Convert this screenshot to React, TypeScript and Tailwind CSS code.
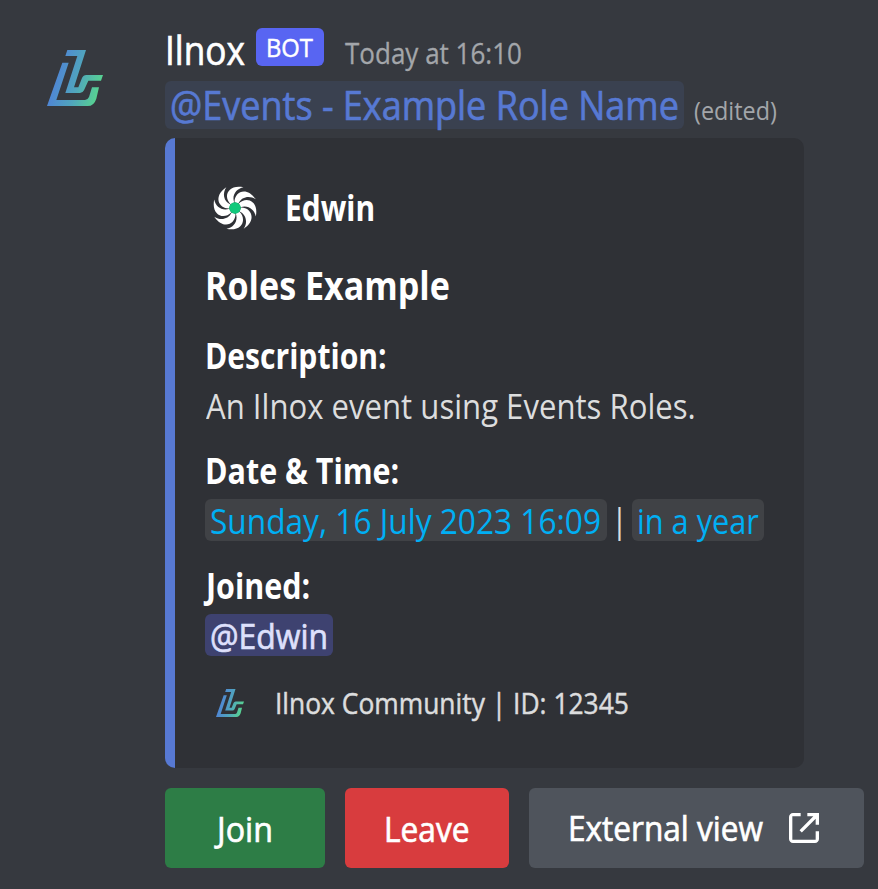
import type { ReactNode } from 'react';
import clsx from 'clsx';

const MEDIUM = '[-webkit-text-stroke:0.7px_currentColor]';

function Label({ className, children }: { className?: string; children: ReactNode }) {
  return (
    <span className={clsx('block w-max shrink-0 origin-left whitespace-nowrap', className)}>
      {children}
    </span>
  );
}

function Logo({ id, className }: { id: string; className?: string }) {
  return (
    <svg viewBox="0 0 168 168" className={className} fill={`url(#${id})`}>
      <defs>
        <linearGradient id={id} gradientUnits="userSpaceOnUse" x1="15" y1="90" x2="160" y2="130">
          <stop offset="0" stopColor="#4f83d6" />
          <stop offset="0.5" stopColor="#50a5bd" />
          <stop offset="1" stopColor="#58d68d" />
        </linearGradient>
      </defs>
      <path d="M61 0H117L81 112H94L105 84Q109 75 118 75H168L162 92H124L111 121Q107 129 99 129H55L91 18H55Z" />
      <path d="M46 38H65L28 150H114Q122 150 126 141L135 112H156L148 146Q141 168 122 168H0Z" />
    </svg>
  );
}

function Swirl() {
  return (
    <svg viewBox="-23 -23 46 46" className="size-[46px]">
      {[0, 45, 90, 135, 180, 225, 270, 315].map((angle) => (
        <path
          key={angle}
          transform={`rotate(${angle})`}
          d="M-4.5 -3.8C-12 -11 -7.5 -24 8.5 -20.8C1.5 -19.5 -3.5 -13 -0.8 -5.6Z"
          fill="#fff"
        />
      ))}
      <circle r="5.8" fill="#10c97b" />
    </svg>
  );
}

function LaunchIcon() {
  return (
    <svg viewBox="0 0 24 24" className="size-10" fill="currentColor">
      <path d="M10 5V3H5.4C4.1 3 3 4.1 3 5.4V18.6C3 19.9 4.1 21 5.4 21H18.6C19.9 21 21 19.9 21 18.6V14H19V19H5V5H10Z" />
      <path d="M21 3H14V5H17.6L9.3 13.3L10.7 14.7L19 6.4V10H21V3Z" />
    </svg>
  );
}

export default function App() {
  return (
    <div className="flex h-[889px] w-[878px] overflow-hidden bg-[#36393f] font-['Open_Sans',sans-serif] text-white">
      <div className="w-[165px] shrink-0 pt-[50px] pl-[47px]">
        <Logo id="avatar" className="size-14" />
      </div>

      <div className="flex flex-col pt-6">
        <div className="flex h-[50px]">
          <div className="w-[91px]">
            <Label className={clsx('scale-x-[0.88] text-[40px] leading-[52px]', MEDIUM)}>Ilnox</Label>
          </div>
          <div className="mt-1 mr-[21px] h-[38px] w-[68px] rounded-md bg-[#5865f2] pl-2.5">
            <Label className="scale-x-[0.95] text-[25px] leading-[38px] [-webkit-text-stroke:0.5px_currentColor]">BOT</Label>
          </div>
          <Label className="scale-x-[0.867] text-[30px] leading-[58px] text-[#a3a6aa] [-webkit-text-stroke:0.3px_currentColor]">
            Today at 16:10
          </Label>
        </div>

        <div className="mt-[7px] flex h-12">
          <div className="mr-2.5 w-[519px] rounded-md bg-[#3a4150] pl-[5px] text-[#5779d3]">
            <Label className={clsx('scale-x-[0.9] text-[40px] leading-[48px]', MEDIUM)}>
              @Events - Example Role Name
            </Label>
          </div>
          <Label className="scale-x-[0.935] text-[25px] leading-[59px] text-[#a3a6aa]">(edited)</Label>
        </div>

        <div className="mt-[9px] flex h-[630px] w-[639px] flex-col rounded-[10px] border-l-[10px] border-[#5779d3] bg-[#2f3136] pl-[30px]">
          <div className="mt-[47px] flex h-[46px] items-center">
            <div className="mr-[27px] ml-[7px]">
              <Swirl />
            </div>
            <Label className="mb-0.5 scale-x-[0.855] text-[35px] leading-[45px] font-bold">Edwin</Label>
          </div>

          <Label className="mt-[29px] scale-x-[0.852] text-[40px] leading-[49px] font-bold">Roles Example</Label>

          <Label className="mt-[22px] scale-x-[0.86] text-[35px] leading-[50px] font-bold">Description:</Label>
          <Label className="ml-px scale-x-[0.889] text-[35px] leading-[50px] text-[#dcddde]">
            An Ilnox event using Events Roles.
          </Label>

          <Label className="mt-[15px] scale-x-[0.87] text-[35px] leading-[50px] font-bold">Date &amp; Time:</Label>
          <div className="flex h-12 items-center text-[35px] leading-[44px] text-[#00aff4]">
            <div className="h-[42px] w-[402px] rounded-md bg-[#404246] pl-[5px]">
              <Label className="scale-x-[0.904]">Sunday, 16 July 2023 16:09</Label>
            </div>
            <div className="w-[25px] pl-1 text-[#dcddde]">
              <Label className="scale-x-[0.88]">|</Label>
            </div>
            <div className="h-[42px] w-[132px] rounded-md bg-[#404246] pl-[5px]">
              <Label className="scale-x-[0.878]">in a year</Label>
            </div>
          </div>

          <Label className="mt-[17px] ml-px scale-x-[0.87] text-[35px] leading-[50px] font-bold">Joined:</Label>
          <div className="flex h-12 items-center">
            <div className="h-[42px] w-32 rounded-md bg-[#3e4270] pl-[5px] text-[#dee0fc]">
              <Label className={clsx('scale-x-[0.91] text-[35px] leading-[43px]', MEDIUM)}>@Edwin</Label>
            </div>
          </div>

          <div className="mt-[19px] flex h-[50px] items-center">
            <div className="mr-[31px] ml-[11px]">
              <Logo id="footer" className="size-7" />
            </div>
            <Label className="scale-x-[0.88] text-[30px] leading-[50px] text-[#dcddde] [-webkit-text-stroke:0.5px_currentColor]">
              Ilnox Community | ID: 12345
            </Label>
          </div>
        </div>

        <div className="mt-5 flex h-20 gap-5 text-[35px] leading-[82px]">
          <button className="w-40 rounded-md bg-[#2d7d46] pl-[52px]">
            <Label className={clsx('scale-x-[0.92]', MEDIUM)}>Join</Label>
          </button>
          <button className="w-[164px] rounded-md bg-[#d83c3e] pl-[39px]">
            <Label className={clsx('scale-x-[0.905]', MEDIUM)}>Leave</Label>
          </button>
          <button className="flex w-[335px] items-center rounded-md bg-[#4f545c] pl-[39px]">
            <div className="w-[216px]">
              <Label className={clsx('scale-x-[0.902]', MEDIUM)}>External view</Label>
            </div>
            <LaunchIcon />
          </button>
        </div>
      </div>
    </div>
  );
}
